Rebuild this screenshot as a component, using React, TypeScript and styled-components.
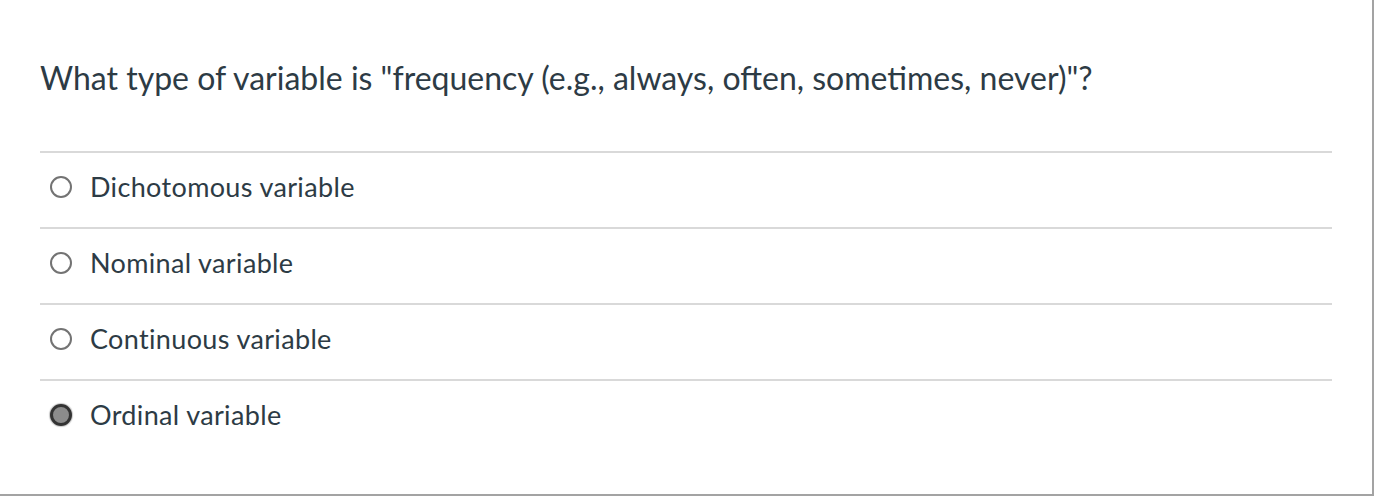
import React from 'react';
import styled, { createGlobalStyle } from 'styled-components';

const GlobalStyle = createGlobalStyle`
  html, body {
    margin: 0;
    padding: 0;
    background: #ffffff;
  }
  body {
    font-family: Lato, "Liberation Sans", sans-serif;
    color: #2d3b45;
  }
`;

const QuestionBox = styled.div`
  box-sizing: border-box;
  width: 1374px;
  height: 496px;
  border-right: 2px solid #a3a3a3;
  border-bottom: 2px solid #a3a3a3;
  padding: 0 40px 0 40px;
`;

const QuestionText = styled.div`
  box-sizing: border-box;
  height: 151px;
  padding-top: 60px;
  font-size: 32px;
  line-height: 36px;
`;

const AnswerList = styled.div`
  display: flex;
  flex-direction: column;
`;

const AnswerRow = styled.label`
  box-sizing: border-box;
  display: flex;
  align-items: center;
  gap: 18px;
  height: 76px;
  padding: 0 0 7px 10px;
  border-top: 2px solid #d9d9d9;
  font-size: 27px;
  cursor: pointer;
`;

const Radio = styled.span<{ $checked?: boolean }>`
  box-sizing: border-box;
  flex: none;
  width: 22px;
  height: 22px;
  border-radius: 50%;
  border: ${({ $checked }) => ($checked ? '3.5px solid #333333' : '2px solid #737373')};
  background: ${({ $checked }) => ($checked ? '#8c8c8c' : '#ffffff')};
  box-shadow: ${({ $checked }) => ($checked ? '0 0 1px 1px rgba(0,0,0,0.22)' : 'none')};
`;

const AnswerLabel = styled.span`
  line-height: 30px;
  letter-spacing: 0.35px;
`;

const answers = [
  { id: 'a1', text: 'Dichotomous variable', checked: false },
  { id: 'a2', text: 'Nominal variable', checked: false },
  { id: 'a3', text: 'Continuous variable', checked: false },
  { id: 'a4', text: 'Ordinal variable', checked: true },
];

export default function App() {
  return (
    <>
      <GlobalStyle />
      <QuestionBox>
        <QuestionText>
          What type of variable is "frequency (e.g., always, often, sometimes, never)"?
        </QuestionText>
        <AnswerList>
          {answers.map((a) => (
            <AnswerRow key={a.id}>
              <Radio $checked={a.checked} />
              <AnswerLabel>{a.text}</AnswerLabel>
            </AnswerRow>
          ))}
        </AnswerList>
      </QuestionBox>
    </>
  );
}
